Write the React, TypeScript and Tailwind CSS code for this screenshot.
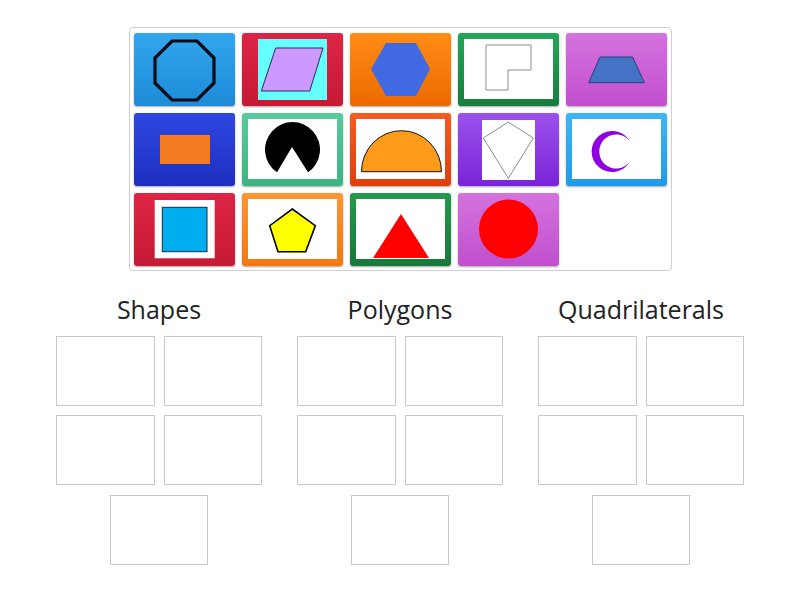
import React from "react";

const W = 101;
const H = 73;

function Tile({ bg, children }: { bg: string; children: React.ReactNode }) {
  return (
    <div className={`w-[101px] h-[73px] rounded-[3px] overflow-hidden shadow-[0_1px_2px_rgba(0,0,0,0.35)] ${bg}`}>
      <svg width={W} height={H} viewBox={`0 0 ${W} ${H}`} className="block">
        {children}
      </svg>
    </div>
  );
}

function Framed({ bg, children }: { bg: string; children: React.ReactNode }) {
  return (
    <Tile bg={bg}>
      <rect x="6" y="6" width="89" height="60" fill="#ffffff" />
      {children}
    </Tile>
  );
}

function Box() {
  return <div className="h-[70px] border border-[#c9c9c9] bg-white" />;
}

function Group({ title }: { title: string }) {
  return (
    <div className="w-[206px] flex flex-col items-center">
      <div className="h-[30px] leading-[30px] text-[25px] text-[#222] font-['Open_Sans',sans-serif] whitespace-nowrap">
        {title}
      </div>
      <div className="mt-[12px] w-full grid grid-cols-2 gap-x-[9px] gap-y-[9px]">
        <Box />
        <Box />
        <Box />
        <Box />
      </div>
      <div className="mt-[10px] w-[98px]">
        <Box />
      </div>
    </div>
  );
}

export default function App() {
  const red = "bg-linear-to-b from-[#de2444] to-[#c41a36]";
  const magenta = "bg-linear-to-b from-[#d472de] to-[#c14fce]";
  return (
    <div className="w-[800px] h-[600px] bg-white flex flex-col items-center font-['Open_Sans',sans-serif]">
      <div className="mt-[27px] w-[543px] border border-[#cfcfcf] rounded-[4px] p-[4px] pt-[5px] grid grid-cols-[repeat(5,101px)] gap-x-[7px] gap-y-[7px]">
        {/* Row 1 */}
        <Tile bg="bg-linear-to-b from-[#33a5ee] to-[#1d8bd8]">
          <polygon
            points="38,8 63,8 80,25 80,50 63,67 38,67 21,50 21,25"
            fill="none"
            stroke="#0a0a14"
            strokeWidth="3.2"
            strokeLinejoin="miter"
          />
        </Tile>
        <Tile bg={red}>
          <rect x="16" y="6" width="69" height="61" fill="#66ffff" />
          <polygon points="33.7,15 81,15 67.7,58 19.3,58" fill="#cc99ff" stroke="#2a2a55" strokeWidth="1" />
        </Tile>
        <Tile bg="bg-linear-to-b from-[#ff8c14] to-[#eb6a00]">
          <polygon points="21,36 36,10 66,10 80,36 66,63 36,63" fill="#4169e1" />
        </Tile>
        <Framed bg="bg-linear-to-b from-[#24a658] to-[#187d3f]">
          <polygon
            points="28,12 73,12 73,37 50,37 50,57 28,57"
            fill="#ffffff"
            stroke="#8c8c8c"
            strokeWidth="1"
          />
        </Framed>
        <Tile bg={magenta}>
          <polygon points="34,24 66.7,24 78.3,49.7 22.7,49.7" fill="#4472c4" stroke="#2b3f7a" strokeWidth="1" />
        </Tile>

        {/* Row 2 */}
        <Tile bg="bg-linear-to-b from-[#2f47e2] to-[#1d2fbf]">
          <rect x="26" y="22" width="50" height="29" fill="#f47b20" />
        </Tile>
        <Framed bg="bg-linear-to-b from-[#58cb9c] to-[#3db382]">
          <path d="M50,34 L66,59.3 A27.5,27.5 0 1 0 35,59.3 Z" fill="#000000" />
        </Framed>
        <Framed bg="bg-linear-to-b from-[#f45c20] to-[#e03f0b]">
          <path d="M11.5,58.7 A40,41 0 0 1 91.5,58.7 Z" fill="#ff9a1a" stroke="#111" strokeWidth="1" />
        </Framed>
        <Tile bg="bg-linear-to-b from-[#9c50ea] to-[#7a22d8]">
          <rect x="24" y="7" width="53" height="60" fill="#ffffff" />
          <polygon points="50.3,9 75.3,25 50.3,65.3 25.3,25" fill="#ffffff" stroke="#8c8c8c" strokeWidth="1" />
        </Tile>
        <Framed bg="bg-linear-to-b from-[#3cb6f6] to-[#1e9be4]">
          <path
            d="M64,28.5 A20.5,20.5 0 1 0 64,48.5 A17,17 0 1 1 64,28.5 Z"
            fill="#9000e0"
          />
        </Framed>

        {/* Row 3 */}
        <Tile bg={red}>
          <rect x="20.7" y="7" width="60" height="58.3" fill="#ffffff" />
          <rect x="28.3" y="14.3" width="44.7" height="44.4" fill="#00aeef" stroke="#1a2a44" strokeWidth="1" />
        </Tile>
        <Framed bg="bg-linear-to-b from-[#ff9632] to-[#f07810]">
          <polygon
            points="50.3,16 73.3,32.7 63.7,58.7 36,58.7 27.7,32.7"
            fill="#ffff00"
            stroke="#000"
            strokeWidth="1.6"
            strokeLinejoin="miter"
          />
        </Framed>
        <Framed bg="bg-linear-to-b from-[#239a4e] to-[#17783a]">
          <polygon points="51,21 79,65 23,65" fill="#ff0000" />
        </Framed>
        <Tile bg={magenta}>
          <circle cx="50.5" cy="36" r="29.5" fill="#ff0000" />
        </Tile>
      </div>

      <div className="mt-[23px] flex gap-[35px]">
        <Group title="Shapes" />
        <Group title="Polygons" />
        <Group title="Quadrilaterals" />
      </div>
    </div>
  );
}
